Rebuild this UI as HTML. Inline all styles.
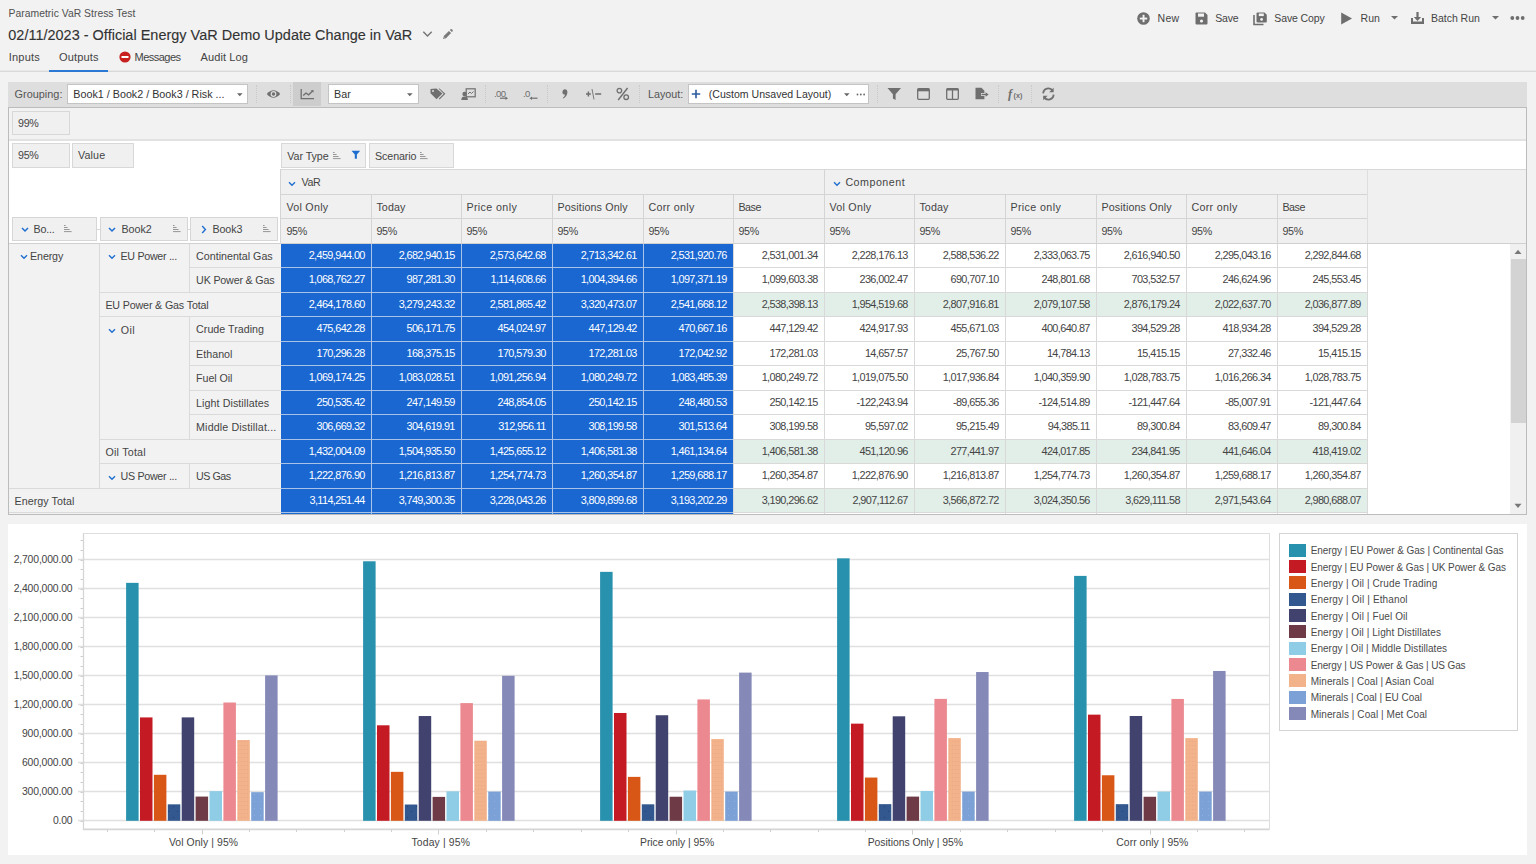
<!DOCTYPE html>
<html><head><meta charset="utf-8"><title>Parametric VaR Stress Test</title>
<style>
*{margin:0;padding:0;box-sizing:border-box}
html,body{width:1536px;height:864px;overflow:hidden;background:#f2f2f2;font-family:"Liberation Sans",sans-serif;color:#444}
body{position:relative}
.a{position:absolute;white-space:nowrap;line-height:1}
.n{letter-spacing:-0.62px}
</style></head><body>
<div class="a " style="left:8.60px;top:9.34px;font-size:10.35px;color:#505050;letter-spacing:0.026px;">Parametric VaR Stress Test</div><div class="a " style="left:8.30px;top:27.57px;font-size:14.45px;color:#333333;-webkit-text-stroke:0.12px #333;letter-spacing:0.023px;">02/11/2023 - Official Energy VaR Demo Update Change in VaR</div><svg class="a" style="left:422px;top:30px;" width="12" height="8" viewBox="0 0 12 8"><path d="M1.3 1.8 L5.5 6 L9.7 1.8" fill="none" stroke="#777" stroke-width="1.5"/></svg><svg class="a" style="left:442px;top:29px;" width="12" height="12" viewBox="0 0 12 12"><path d="M1 10 L1.8 7 L6.9 1.9 L9.1 4.1 L4 9.2 Z" fill="#7a7a7a"/><path d="M7.8 1 L8.6 0.3 Q9.4 -0.2 10.2 0.6 L10.4 0.8 Q11.1 1.6 10.5 2.4 L9.9 3.1 Z" fill="#7a7a7a"/><path d="M1.8 8.2 L2.6 9.2" stroke="#f2f2f2" stroke-width="0.6"/></svg><div class="a " style="left:8.80px;top:51.65px;font-size:11.05px;color:#444;letter-spacing:0.180px;">Inputs</div><div class="a " style="left:58.90px;top:51.65px;font-size:11.05px;color:#444;letter-spacing:0.151px;">Outputs</div><svg class="a" style="left:119px;top:51px;" width="12" height="12" viewBox="0 0 12 12"><circle cx="6" cy="6" r="5.6" fill="#c8201f"/><rect x="2.5" y="5" width="7" height="2" fill="#fff"/></svg><div class="a " style="left:134.60px;top:51.65px;font-size:11.05px;color:#444;letter-spacing:-0.552px;">Messages</div><div class="a " style="left:200.60px;top:51.65px;font-size:11.05px;color:#444;letter-spacing:0.076px;">Audit Log</div><div class="a" style="left:0px;top:70px;width:1536px;height:1px;background:#e8e8e8"></div><div class="a" style="left:0px;top:71px;width:1536px;height:1px;background:#d9d9d9"></div><div class="a" style="left:49px;top:70px;width:59px;height:2px;background:#2b78d5"></div><svg class="a" style="left:1137px;top:12px;" width="13" height="13" viewBox="0 0 13 13"><circle cx="6.5" cy="6.5" r="6.3" fill="#6e6e6e"/><rect x="5.6" y="2.8" width="1.9" height="7.4" fill="#f2f2f2"/><rect x="2.8" y="5.6" width="7.4" height="1.9" fill="#f2f2f2"/></svg><div class="a " style="left:1157.60px;top:13.01px;font-size:10.5px;color:#444;letter-spacing:0.297px;">New</div><svg class="a" style="left:1195px;top:12px;" width="13" height="13" viewBox="0 0 13 13"><path d="M0.5 1.5 Q0.5 0.5 1.5 0.5 L10 0.5 L12.5 3 L12.5 11.5 Q12.5 12.5 11.5 12.5 L1.5 12.5 Q0.5 12.5 0.5 11.5Z" fill="#6e6e6e"/><rect x="3" y="1.5" width="6" height="3.2" fill="#f2f2f2"/><circle cx="6.5" cy="9" r="1.6" fill="#f2f2f2"/></svg><div class="a " style="left:1215.30px;top:13.01px;font-size:10.5px;color:#444;letter-spacing:-0.211px;">Save</div><svg class="a" style="left:1253px;top:11px;" width="15" height="15" viewBox="0 0 15 15"><path d="M1 4 L1 13.5 L10.5 13.5" fill="none" stroke="#6e6e6e" stroke-width="1.6"/><path d="M3.5 2.5 Q3.5 1.5 4.5 1.5 L11.5 1.5 L13.8 3.8 L13.8 10.5 Q13.8 11.5 12.8 11.5 L4.5 11.5 Q3.5 11.5 3.5 10.5Z" fill="#6e6e6e"/><rect x="5.8" y="2.5" width="5" height="2.6" fill="#f2f2f2"/><circle cx="8.6" cy="8.4" r="1.4" fill="#f2f2f2"/></svg><div class="a " style="left:1274.30px;top:13.01px;font-size:10.5px;color:#444;letter-spacing:-0.108px;">Save Copy</div><svg class="a" style="left:1340px;top:12px;" width="13" height="13" viewBox="0 0 13 13"><path d="M1.2 0.5 L12 6.5 L1.2 12.5Z" fill="#6e6e6e"/></svg><div class="a " style="left:1360.60px;top:13.01px;font-size:10.5px;color:#444;letter-spacing:-0.031px;">Run</div><svg class="a" style="left:1391px;top:16px;" width="7" height="4" viewBox="0 0 7 4"><path d="M0 0 L7 0 L3.5 3.5Z" fill="#6e6e6e"/></svg><svg class="a" style="left:1410px;top:11px;" width="15" height="14" viewBox="0 0 15 14"><path d="M1 7 L1 13 L14 13 L14 7 L12 7 L12 10.5 L3 10.5 L3 7Z" fill="#6e6e6e"/><rect x="6.4" y="1" width="2.2" height="6" fill="#6e6e6e"/><path d="M3.8 6 L11.2 6 L7.5 10Z" fill="#6e6e6e"/></svg><div class="a " style="left:1431.00px;top:13.01px;font-size:10.5px;color:#444;letter-spacing:-0.029px;">Batch Run</div><svg class="a" style="left:1492px;top:16px;" width="7" height="4" viewBox="0 0 7 4"><path d="M0 0 L7 0 L3.5 3.5Z" fill="#6e6e6e"/></svg><svg class="a" style="left:1510px;top:15px;" width="15" height="6" viewBox="0 0 15 6"><circle cx="2.3" cy="3" r="1.9" fill="#6e6e6e"/><circle cx="7.5" cy="3" r="1.9" fill="#6e6e6e"/><circle cx="12.7" cy="3" r="1.9" fill="#6e6e6e"/></svg><div class="a" style="left:8px;top:82px;width:1519px;height:25px;background:#dedede"></div><div class="a " style="left:14.60px;top:88.77px;font-size:10.9px;color:#555;">Grouping:</div><div class="a" style="left:67px;top:84px;width:181px;height:20px;background:#fff;border:1px solid #c4c4c4"></div><div class="a " style="left:73.30px;top:88.90px;font-size:10.75px;color:#333;">Book1 / Book2 / Book3 / Risk ...</div><svg class="a" style="left:237px;top:93px;" width="6" height="4" viewBox="0 0 6 4"><path d="M0 0.3 L5.6 0.3 L2.8 3.2Z" fill="#666"/></svg><div class="a" style="left:256px;top:85px;width:1px;height:18px;border-left:1px dotted #c9c9c9"></div><svg class="a" style="left:266px;top:88px;" width="15" height="12" viewBox="0 0 15 12"><path d="M0.8 6 Q7.5 -1.5 14.2 6 Q7.5 13.5 0.8 6Z" fill="#6f6f6f"/><circle cx="7.5" cy="6" r="2.9" fill="#dddddd"/><circle cx="7.5" cy="6" r="1.7" fill="#6f6f6f"/></svg><div class="a" style="left:290px;top:85px;width:1px;height:18px;border-left:1px dotted #c9c9c9"></div><div class="a" style="left:293px;top:82px;width:28px;height:24px;background:#cdcdcd"></div><svg class="a" style="left:300px;top:88px;" width="15" height="12" viewBox="0 0 15 12"><path d="M1.2 1 L1.2 10.6 L14 10.6" fill="none" stroke="#6f6f6f" stroke-width="1.3"/><path d="M3.2 7.6 L6 5 L8.6 6.8 L12.6 3" fill="none" stroke="#6f6f6f" stroke-width="1.3"/><path d="M10.8 2.2 L13.6 2 L13.4 4.8Z" fill="#6f6f6f"/></svg><div class="a" style="left:328px;top:84px;width:91px;height:20px;background:#fff;border:1px solid #c4c4c4"></div><div class="a " style="left:334.00px;top:88.90px;font-size:10.75px;color:#333;">Bar</div><svg class="a" style="left:407px;top:93px;" width="6" height="4" viewBox="0 0 6 4"><path d="M0 0.3 L5.6 0.3 L2.8 3.2Z" fill="#666"/></svg><svg class="a" style="left:430px;top:88px;" width="17" height="12" viewBox="0 0 17 12"><path d="M0.5 1 L0.5 5.2 L6.5 11.3 L12.4 5.4 L6.4 0.6 Z" fill="#6f6f6f"/><path d="M8.5 0.6 L9.5 0.6 L15.4 5.8 L9.6 11.4 L8.8 10.7 L13.7 5.8Z" fill="#6f6f6f"/><circle cx="3" cy="3" r="1" fill="#ddd"/></svg><svg class="a" style="left:461px;top:88px;" width="15" height="13" viewBox="0 0 15 13"><rect x="5.2" y="0.8" width="9" height="8" fill="none" stroke="#6f6f6f" stroke-width="1.2"/><path d="M7 6 L9 4 L10.5 5.5 L12.5 3.5" fill="none" stroke="#6f6f6f" stroke-width="1"/><circle cx="3.6" cy="6" r="2.2" fill="#6f6f6f"/><path d="M0.3 12 Q0.3 8.6 3.6 8.6 Q6.9 8.6 6.9 12Z" fill="#6f6f6f"/></svg><div class="a" style="left:485px;top:85px;width:1px;height:18px;border-left:1px dotted #c9c9c9"></div><svg class="a" style="left:494px;top:88px;" width="16" height="12" viewBox="0 0 16 12"><text x="0" y="8.6" font-size="9.5" font-family="Liberation Sans" fill="#6f6f6f" letter-spacing="-0.6">.00</text><path d="M6 10.2 L12.5 10.2" stroke="#6f6f6f" stroke-width="1.2"/><path d="M11.5 8.4 L14 10.2 L11.5 12Z" fill="#6f6f6f"/></svg><svg class="a" style="left:523px;top:88px;" width="16" height="12" viewBox="0 0 16 12"><text x="0" y="8.6" font-size="9.5" font-family="Liberation Sans" fill="#6f6f6f" letter-spacing="-0.6">.0</text><path d="M8 10.2 L14.5 10.2" stroke="#6f6f6f" stroke-width="1.2"/><path d="M9 8.4 L6.5 10.2 L9 12Z" fill="#6f6f6f"/></svg><div class="a" style="left:547px;top:85px;width:1px;height:18px;border-left:1px dotted #c9c9c9"></div><svg class="a" style="left:560px;top:88px;" width="10" height="12" viewBox="0 0 10 12"><path d="M4.6 1.2 Q7.6 1.2 7.4 4.6 Q7 8.6 3.2 10.6 L2.8 10 Q5 8.2 5 6.6 Q2.4 6.6 2.4 4 Q2.6 1.2 4.6 1.2Z" fill="#6f6f6f"/></svg><svg class="a" style="left:585px;top:88px;" width="18" height="13" viewBox="0 0 18 13"><path d="M1 6 L5.8 6 M3.4 3.6 L3.4 8.4" stroke="#6f6f6f" stroke-width="1.5"/><path d="M7 1 L9 11.5" stroke="#6f6f6f" stroke-width="0.9"/><path d="M10.2 6 L16.2 6" stroke="#6f6f6f" stroke-width="1.5"/></svg><svg class="a" style="left:616px;top:87px;" width="14" height="14" viewBox="0 0 14 14"><circle cx="3.4" cy="3.6" r="2.3" fill="none" stroke="#6f6f6f" stroke-width="1.3"/><circle cx="10.2" cy="10.2" r="2.3" fill="none" stroke="#6f6f6f" stroke-width="1.3"/><path d="M11.6 1 L2.2 13" stroke="#6f6f6f" stroke-width="1.4"/></svg><div class="a" style="left:639px;top:85px;width:1px;height:18px;border-left:1px dotted #c9c9c9"></div><div class="a " style="left:648.00px;top:88.90px;font-size:10.75px;color:#555;">Layout:</div><div class="a" style="left:688px;top:84px;width:181px;height:20px;background:#fff;border:1px solid #c4c4c4"></div><svg class="a" style="left:690px;top:88px;" width="12" height="12" viewBox="0 0 12 12"><path d="M6 1.8 L6 10.2 M1.8 6 L10.2 6" stroke="#2a5a9e" stroke-width="1.6"/></svg><div class="a " style="left:708.75px;top:89.07px;font-size:10.55px;color:#333;">(Custom Unsaved Layout)</div><svg class="a" style="left:844px;top:93px;" width="6" height="4" viewBox="0 0 6 4"><path d="M0 0.3 L5.6 0.3 L2.8 3.2Z" fill="#666"/></svg><svg class="a" style="left:856px;top:93px;" width="10" height="3" viewBox="0 0 10 3"><circle cx="1.5" cy="1.5" r="0.9" fill="#666"/><circle cx="4.8" cy="1.5" r="0.9" fill="#666"/><circle cx="8.1" cy="1.5" r="0.9" fill="#666"/></svg><div class="a" style="left:877px;top:85px;width:1px;height:18px;border-left:1px dotted #c9c9c9"></div><svg class="a" style="left:887px;top:87px;" width="15" height="14" viewBox="0 0 15 14"><path d="M0.5 1 L14 1 L8.6 7.2 L8.6 13 L5.9 11.6 L5.9 7.2Z" fill="#6f6f6f"/></svg><svg class="a" style="left:917px;top:88px;" width="13" height="12" viewBox="0 0 13 12"><rect x="0.7" y="0.7" width="11.6" height="10.6" rx="1" fill="none" stroke="#6f6f6f" stroke-width="1.3"/><rect x="0.7" y="0.7" width="11.6" height="2.6" fill="#6f6f6f"/></svg><svg class="a" style="left:946px;top:88px;" width="13" height="12" viewBox="0 0 13 12"><rect x="0.7" y="0.7" width="11.6" height="10.6" rx="1" fill="none" stroke="#6f6f6f" stroke-width="1.3"/><rect x="0.7" y="0.7" width="11.6" height="1.8" fill="#6f6f6f"/><path d="M6.5 1 L6.5 11" stroke="#6f6f6f" stroke-width="1.3"/></svg><svg class="a" style="left:975px;top:87px;" width="14" height="14" viewBox="0 0 14 14"><path d="M0.5 0.8 L6.5 0.8 L9.4 3.7 L9.4 6 L6 6 L6 9 L9.4 9 L9.4 12.2 L0.5 12.2Z" fill="#6f6f6f"/><path d="M6.5 7.5 L11 7.5" stroke="#6f6f6f" stroke-width="1.4"/><path d="M10.6 5.2 L13.6 7.5 L10.6 9.8Z" fill="#6f6f6f"/></svg><div class="a" style="left:998px;top:85px;width:1px;height:18px;border-left:1px dotted #c9c9c9"></div><svg class="a" style="left:1007px;top:87px;" width="17" height="14" viewBox="0 0 17 14"><text x="1" y="11" font-size="12.5" font-style="italic" font-weight="bold" font-family="Liberation Serif" fill="#6f6f6f">f</text><text x="6.6" y="10.8" font-size="7.2" font-weight="bold" font-family="Liberation Sans" fill="#6f6f6f">(x)</text></svg><div class="a" style="left:1031px;top:85px;width:1px;height:18px;border-left:1px dotted #c9c9c9"></div><svg class="a" style="left:1041px;top:87px;" width="15" height="14" viewBox="0 0 15 14"><path d="M2.2 6.4 A5.2 5.2 0 0 1 11.6 3.6" fill="none" stroke="#6f6f6f" stroke-width="1.8"/><path d="M12.6 0.8 L12.6 5.2 L8.2 5.2Z" fill="#6f6f6f"/><path d="M12.6 7.6 A5.2 5.2 0 0 1 3.2 10.4" fill="none" stroke="#6f6f6f" stroke-width="1.8"/><path d="M2.2 13.2 L2.2 8.8 L6.6 8.8Z" fill="#6f6f6f"/></svg><div class="a" style="left:8px;top:107px;width:1519px;height:408px;background:#fff;border:1px solid #bcbcbc"></div><div class="a" style="left:9px;top:108px;width:1517px;height:31px;background:#f2f2f2"></div><div class="a" style="left:9px;top:139px;width:1517px;height:2px;background:#e2e2e2"></div><div class="a" style="left:12px;top:111px;width:58px;height:24px;background:#f0f0f0;border:1px solid #d8d8d8"></div><div class="a " style="left:18.00px;top:118.44px;font-size:10.7px;color:#444;letter-spacing:-0.308px;">99%</div><div class="a" style="left:12px;top:143px;width:58px;height:25px;background:#f0f0f0;border:1px solid #d8d8d8"></div><div class="a " style="left:18.00px;top:150.44px;font-size:10.7px;color:#444;letter-spacing:-0.308px;">95%</div><div class="a" style="left:72px;top:143px;width:62px;height:25px;background:#f0f0f0;border:1px solid #d8d8d8"></div><div class="a " style="left:78.00px;top:150.44px;font-size:10.7px;color:#444;letter-spacing:0.157px;">Value</div><div class="a" style="left:281px;top:143px;width:85px;height:25px;background:#f0f0f0;border:1px solid #d8d8d8"></div><div class="a " style="left:287.30px;top:150.54px;font-size:10.7px;color:#444;letter-spacing:-0.062px;">Var Type</div><svg class="a" style="left:332.5px;top:152px;" width="9" height="8" viewBox="0 0 9 8"><path d="M0 0.5 L1.6 0.5 M0 2.5 L3.6 2.5 M0 4.5 L5.6 4.5 M0 6.6 L7.6 6.6" stroke="#8c8c8c" stroke-width="0.9"/></svg><svg class="a" style="left:351px;top:150px;" width="10" height="10" viewBox="0 0 10 10"><path d="M0.5 0.8 L9.2 0.8 L5.9 4.6 L5.9 8.8 L3.8 8.8 L3.8 4.6Z" fill="#1e6fd0"/></svg><div class="a" style="left:369px;top:143px;width:85px;height:25px;background:#f0f0f0;border:1px solid #d8d8d8"></div><div class="a " style="left:375.10px;top:150.54px;font-size:10.7px;color:#444;letter-spacing:-0.119px;">Scenario</div><svg class="a" style="left:420.4px;top:152px;" width="9" height="8" viewBox="0 0 9 8"><path d="M0 0.5 L1.6 0.5 M0 2.5 L3.6 2.5 M0 4.5 L5.6 4.5 M0 6.6 L7.6 6.6" stroke="#8c8c8c" stroke-width="0.9"/></svg><div class="a" style="left:281px;top:169px;width:1245px;height:74px;background:#f0f0f0"></div><div class="a" style="left:281px;top:169px;width:1245px;height:1px;background:#d8d8d8"></div><div class="a" style="left:281px;top:194px;width:1086px;height:1px;background:#d4d4d4"></div><div class="a" style="left:281px;top:218px;width:1086px;height:1px;background:#d4d4d4"></div><div class="a" style="left:9px;top:243px;width:1517px;height:1px;background:#d0d0d0"></div><div class="a" style="left:280px;top:169px;width:1px;height:75px;background:#d4d4d4"></div><div class="a" style="left:824px;top:169px;width:1px;height:75px;background:#d4d4d4"></div><div class="a" style="left:1367px;top:170px;width:1px;height:73px;background:#dedede"></div><div class="a" style="left:371px;top:194px;width:1px;height:49px;background:#d4d4d4"></div><div class="a" style="left:461px;top:194px;width:1px;height:49px;background:#d4d4d4"></div><div class="a" style="left:552px;top:194px;width:1px;height:49px;background:#d4d4d4"></div><div class="a" style="left:643px;top:194px;width:1px;height:49px;background:#d4d4d4"></div><div class="a" style="left:733px;top:194px;width:1px;height:49px;background:#d4d4d4"></div><div class="a" style="left:914px;top:194px;width:1px;height:49px;background:#d4d4d4"></div><div class="a" style="left:1005px;top:194px;width:1px;height:49px;background:#d4d4d4"></div><div class="a" style="left:1096px;top:194px;width:1px;height:49px;background:#d4d4d4"></div><div class="a" style="left:1186px;top:194px;width:1px;height:49px;background:#d4d4d4"></div><div class="a" style="left:1277px;top:194px;width:1px;height:49px;background:#d4d4d4"></div><svg class="a" style="left:288px;top:181px;" width="8" height="6" viewBox="0 0 8 6"><path d="M1 1.2 L4 4.2 L7 1.2" fill="none" stroke="#1f6fd0" stroke-width="1.4"/></svg><div class="a " style="left:301.50px;top:176.94px;font-size:10.7px;color:#444;letter-spacing:-0.411px;">VaR</div><svg class="a" style="left:833px;top:181px;" width="8" height="6" viewBox="0 0 8 6"><path d="M1 1.2 L4 4.2 L7 1.2" fill="none" stroke="#1f6fd0" stroke-width="1.4"/></svg><div class="a " style="left:845.40px;top:176.94px;font-size:10.7px;color:#444;letter-spacing:0.498px;">Component</div><div class="a " style="left:286.40px;top:201.54px;font-size:10.7px;color:#444;letter-spacing:0.279px;">Vol Only</div><div class="a " style="left:286.40px;top:225.74px;font-size:10.7px;color:#444;letter-spacing:-0.308px;">95%</div><div class="a " style="left:376.40px;top:201.54px;font-size:10.7px;color:#444;letter-spacing:0.112px;">Today</div><div class="a " style="left:376.40px;top:225.74px;font-size:10.7px;color:#444;letter-spacing:-0.308px;">95%</div><div class="a " style="left:466.40px;top:201.54px;font-size:10.7px;color:#444;letter-spacing:0.380px;">Price only</div><div class="a " style="left:466.40px;top:225.74px;font-size:10.7px;color:#444;letter-spacing:-0.308px;">95%</div><div class="a " style="left:557.40px;top:201.54px;font-size:10.7px;color:#444;letter-spacing:0.147px;">Positions Only</div><div class="a " style="left:557.40px;top:225.74px;font-size:10.7px;color:#444;letter-spacing:-0.308px;">95%</div><div class="a " style="left:648.40px;top:201.54px;font-size:10.7px;color:#444;letter-spacing:0.324px;">Corr only</div><div class="a " style="left:648.40px;top:225.74px;font-size:10.7px;color:#444;letter-spacing:-0.308px;">95%</div><div class="a " style="left:738.40px;top:201.54px;font-size:10.7px;color:#444;letter-spacing:-0.463px;">Base</div><div class="a " style="left:738.40px;top:225.74px;font-size:10.7px;color:#444;letter-spacing:-0.308px;">95%</div><div class="a " style="left:829.40px;top:201.54px;font-size:10.7px;color:#444;letter-spacing:0.279px;">Vol Only</div><div class="a " style="left:829.40px;top:225.74px;font-size:10.7px;color:#444;letter-spacing:-0.308px;">95%</div><div class="a " style="left:919.40px;top:201.54px;font-size:10.7px;color:#444;letter-spacing:0.112px;">Today</div><div class="a " style="left:919.40px;top:225.74px;font-size:10.7px;color:#444;letter-spacing:-0.308px;">95%</div><div class="a " style="left:1010.40px;top:201.54px;font-size:10.7px;color:#444;letter-spacing:0.380px;">Price only</div><div class="a " style="left:1010.40px;top:225.74px;font-size:10.7px;color:#444;letter-spacing:-0.308px;">95%</div><div class="a " style="left:1101.40px;top:201.54px;font-size:10.7px;color:#444;letter-spacing:0.147px;">Positions Only</div><div class="a " style="left:1101.40px;top:225.74px;font-size:10.7px;color:#444;letter-spacing:-0.308px;">95%</div><div class="a " style="left:1191.40px;top:201.54px;font-size:10.7px;color:#444;letter-spacing:0.324px;">Corr only</div><div class="a " style="left:1191.40px;top:225.74px;font-size:10.7px;color:#444;letter-spacing:-0.308px;">95%</div><div class="a " style="left:1282.40px;top:201.54px;font-size:10.7px;color:#444;letter-spacing:-0.463px;">Base</div><div class="a " style="left:1282.40px;top:225.74px;font-size:10.7px;color:#444;letter-spacing:-0.308px;">95%</div><div class="a" style="left:12px;top:217px;width:85px;height:24px;background:#f0f0f0;border:1px solid #d6d6d6"></div><svg class="a" style="left:20.5px;top:227px;" width="8" height="6" viewBox="0 0 8 6"><path d="M1 1 L4 4 L7 1" fill="none" stroke="#1f6fd0" stroke-width="1.5"/></svg><div class="a " style="left:33.50px;top:223.94px;font-size:10.7px;color:#444;letter-spacing:-0.177px;">Bo...</div><svg class="a" style="left:63.6px;top:225px;" width="9" height="8" viewBox="0 0 9 8"><path d="M0 0.5 L1.6 0.5 M0 2.5 L3.6 2.5 M0 4.5 L5.6 4.5 M0 6.6 L7.6 6.6" stroke="#8c8c8c" stroke-width="0.9"/></svg><div class="a" style="left:100px;top:217px;width:88px;height:24px;background:#f0f0f0;border:1px solid #d6d6d6"></div><svg class="a" style="left:108.0px;top:227px;" width="8" height="6" viewBox="0 0 8 6"><path d="M1 1 L4 4 L7 1" fill="none" stroke="#1f6fd0" stroke-width="1.5"/></svg><div class="a " style="left:121.40px;top:223.94px;font-size:10.7px;color:#444;letter-spacing:0.015px;">Book2</div><svg class="a" style="left:172.7px;top:225px;" width="9" height="8" viewBox="0 0 9 8"><path d="M0 0.5 L1.6 0.5 M0 2.5 L3.6 2.5 M0 4.5 L5.6 4.5 M0 6.6 L7.6 6.6" stroke="#8c8c8c" stroke-width="0.9"/></svg><div class="a" style="left:190px;top:217px;width:88px;height:24px;background:#f0f0f0;border:1px solid #d6d6d6"></div><svg class="a" style="left:200.5px;top:225px;" width="6" height="9" viewBox="0 0 6 9"><path d="M1.2 1 L4.4 4.5 L1.2 8" fill="none" stroke="#1f6fd0" stroke-width="1.4"/></svg><div class="a " style="left:212.40px;top:223.94px;font-size:10.7px;color:#444;letter-spacing:-0.085px;">Book3</div><svg class="a" style="left:263.4px;top:225px;" width="9" height="8" viewBox="0 0 9 8"><path d="M0 0.5 L1.6 0.5 M0 2.5 L3.6 2.5 M0 4.5 L5.6 4.5 M0 6.6 L7.6 6.6" stroke="#8c8c8c" stroke-width="0.9"/></svg><div class="a" style="left:97px;top:229px;width:3px;height:1px;background:#d6d6d6"></div><div class="a" style="left:188px;top:229px;width:2px;height:1px;background:#d6d6d6"></div><div class="a" style="left:9px;top:244px;width:272px;height:270px;background:#f2f2f2"></div><div class="a" style="left:733px;top:293px;width:634px;height:23px;background:#e2efe8"></div><div class="a" style="left:733px;top:440px;width:634px;height:23px;background:#e2efe8"></div><div class="a" style="left:733px;top:489px;width:634px;height:23px;background:#e2efe8"></div><div class="a" style="left:281px;top:244px;width:452px;height:270px;background:#1a67d2"></div><div class="a" style="left:281px;top:267px;width:452px;height:1px;background:#a9c3e6"></div><div class="a" style="left:733px;top:267px;width:634px;height:1px;background:#d9d9d9"></div><div class="a" style="left:281px;top:292px;width:452px;height:1px;background:#a9c3e6"></div><div class="a" style="left:733px;top:292px;width:634px;height:1px;background:#d9d9d9"></div><div class="a" style="left:281px;top:316px;width:452px;height:1px;background:#a9c3e6"></div><div class="a" style="left:733px;top:316px;width:634px;height:1px;background:#d9d9d9"></div><div class="a" style="left:281px;top:341px;width:452px;height:1px;background:#a9c3e6"></div><div class="a" style="left:733px;top:341px;width:634px;height:1px;background:#d9d9d9"></div><div class="a" style="left:281px;top:365px;width:452px;height:1px;background:#a9c3e6"></div><div class="a" style="left:733px;top:365px;width:634px;height:1px;background:#d9d9d9"></div><div class="a" style="left:281px;top:390px;width:452px;height:1px;background:#a9c3e6"></div><div class="a" style="left:733px;top:390px;width:634px;height:1px;background:#d9d9d9"></div><div class="a" style="left:281px;top:414px;width:452px;height:1px;background:#a9c3e6"></div><div class="a" style="left:733px;top:414px;width:634px;height:1px;background:#d9d9d9"></div><div class="a" style="left:281px;top:439px;width:452px;height:1px;background:#a9c3e6"></div><div class="a" style="left:733px;top:439px;width:634px;height:1px;background:#d9d9d9"></div><div class="a" style="left:281px;top:463px;width:452px;height:1px;background:#a9c3e6"></div><div class="a" style="left:733px;top:463px;width:634px;height:1px;background:#d9d9d9"></div><div class="a" style="left:281px;top:488px;width:452px;height:1px;background:#a9c3e6"></div><div class="a" style="left:733px;top:488px;width:634px;height:1px;background:#d9d9d9"></div><div class="a" style="left:281px;top:512px;width:452px;height:1px;background:#a9c3e6"></div><div class="a" style="left:733px;top:512px;width:634px;height:1px;background:#d9d9d9"></div><div class="a" style="left:371px;top:244px;width:1px;height:270px;background:#a9c3e6"></div><div class="a" style="left:461px;top:244px;width:1px;height:270px;background:#a9c3e6"></div><div class="a" style="left:552px;top:244px;width:1px;height:270px;background:#a9c3e6"></div><div class="a" style="left:643px;top:244px;width:1px;height:270px;background:#a9c3e6"></div><div class="a" style="left:733px;top:244px;width:1px;height:270px;background:#d9d9d9"></div><div class="a" style="left:824px;top:244px;width:1px;height:270px;background:#d9d9d9"></div><div class="a" style="left:914px;top:244px;width:1px;height:270px;background:#d9d9d9"></div><div class="a" style="left:1005px;top:244px;width:1px;height:270px;background:#d9d9d9"></div><div class="a" style="left:1096px;top:244px;width:1px;height:270px;background:#d9d9d9"></div><div class="a" style="left:1186px;top:244px;width:1px;height:270px;background:#d9d9d9"></div><div class="a" style="left:1277px;top:244px;width:1px;height:270px;background:#d9d9d9"></div><div class="a" style="left:1367px;top:244px;width:1px;height:270px;background:#d9d9d9"></div><div class="a" style="right:1171.20px;top:250.37px;font-size:10.9px;color:#ffffff;letter-spacing:-0.62px">2,459,944.00</div><div class="a" style="right:1081.20px;top:250.37px;font-size:10.9px;color:#ffffff;letter-spacing:-0.62px">2,682,940.15</div><div class="a" style="right:990.20px;top:250.37px;font-size:10.9px;color:#ffffff;letter-spacing:-0.62px">2,573,642.68</div><div class="a" style="right:899.20px;top:250.37px;font-size:10.9px;color:#ffffff;letter-spacing:-0.62px">2,713,342.61</div><div class="a" style="right:809.20px;top:250.37px;font-size:10.9px;color:#ffffff;letter-spacing:-0.62px">2,531,920.76</div><div class="a" style="right:718.20px;top:250.37px;font-size:10.9px;color:#444;letter-spacing:-0.62px">2,531,001.34</div><div class="a" style="right:628.20px;top:250.37px;font-size:10.9px;color:#444;letter-spacing:-0.62px">2,228,176.13</div><div class="a" style="right:537.20px;top:250.37px;font-size:10.9px;color:#444;letter-spacing:-0.62px">2,588,536.22</div><div class="a" style="right:446.20px;top:250.37px;font-size:10.9px;color:#444;letter-spacing:-0.62px">2,333,063.75</div><div class="a" style="right:356.20px;top:250.37px;font-size:10.9px;color:#444;letter-spacing:-0.62px">2,616,940.50</div><div class="a" style="right:265.20px;top:250.37px;font-size:10.9px;color:#444;letter-spacing:-0.62px">2,295,043.16</div><div class="a" style="right:175.20px;top:250.37px;font-size:10.9px;color:#444;letter-spacing:-0.62px">2,292,844.68</div><div class="a" style="right:1171.20px;top:274.37px;font-size:10.9px;color:#ffffff;letter-spacing:-0.62px">1,068,762.27</div><div class="a" style="right:1081.20px;top:274.37px;font-size:10.9px;color:#ffffff;letter-spacing:-0.62px">987,281.30</div><div class="a" style="right:990.20px;top:274.37px;font-size:10.9px;color:#ffffff;letter-spacing:-0.62px">1,114,608.66</div><div class="a" style="right:899.20px;top:274.37px;font-size:10.9px;color:#ffffff;letter-spacing:-0.62px">1,004,394.66</div><div class="a" style="right:809.20px;top:274.37px;font-size:10.9px;color:#ffffff;letter-spacing:-0.62px">1,097,371.19</div><div class="a" style="right:718.20px;top:274.37px;font-size:10.9px;color:#444;letter-spacing:-0.62px">1,099,603.38</div><div class="a" style="right:628.20px;top:274.37px;font-size:10.9px;color:#444;letter-spacing:-0.62px">236,002.47</div><div class="a" style="right:537.20px;top:274.37px;font-size:10.9px;color:#444;letter-spacing:-0.62px">690,707.10</div><div class="a" style="right:446.20px;top:274.37px;font-size:10.9px;color:#444;letter-spacing:-0.62px">248,801.68</div><div class="a" style="right:356.20px;top:274.37px;font-size:10.9px;color:#444;letter-spacing:-0.62px">703,532.57</div><div class="a" style="right:265.20px;top:274.37px;font-size:10.9px;color:#444;letter-spacing:-0.62px">246,624.96</div><div class="a" style="right:175.20px;top:274.37px;font-size:10.9px;color:#444;letter-spacing:-0.62px">245,553.45</div><div class="a" style="right:1171.20px;top:299.37px;font-size:10.9px;color:#ffffff;letter-spacing:-0.62px">2,464,178.60</div><div class="a" style="right:1081.20px;top:299.37px;font-size:10.9px;color:#ffffff;letter-spacing:-0.62px">3,279,243.32</div><div class="a" style="right:990.20px;top:299.37px;font-size:10.9px;color:#ffffff;letter-spacing:-0.62px">2,581,865.42</div><div class="a" style="right:899.20px;top:299.37px;font-size:10.9px;color:#ffffff;letter-spacing:-0.62px">3,320,473.07</div><div class="a" style="right:809.20px;top:299.37px;font-size:10.9px;color:#ffffff;letter-spacing:-0.62px">2,541,668.12</div><div class="a" style="right:718.20px;top:299.37px;font-size:10.9px;color:#444;letter-spacing:-0.62px">2,538,398.13</div><div class="a" style="right:628.20px;top:299.37px;font-size:10.9px;color:#444;letter-spacing:-0.62px">1,954,519.68</div><div class="a" style="right:537.20px;top:299.37px;font-size:10.9px;color:#444;letter-spacing:-0.62px">2,807,916.81</div><div class="a" style="right:446.20px;top:299.37px;font-size:10.9px;color:#444;letter-spacing:-0.62px">2,079,107.58</div><div class="a" style="right:356.20px;top:299.37px;font-size:10.9px;color:#444;letter-spacing:-0.62px">2,876,179.24</div><div class="a" style="right:265.20px;top:299.37px;font-size:10.9px;color:#444;letter-spacing:-0.62px">2,022,637.70</div><div class="a" style="right:175.20px;top:299.37px;font-size:10.9px;color:#444;letter-spacing:-0.62px">2,036,877.89</div><div class="a" style="right:1171.20px;top:323.37px;font-size:10.9px;color:#ffffff;letter-spacing:-0.62px">475,642.28</div><div class="a" style="right:1081.20px;top:323.37px;font-size:10.9px;color:#ffffff;letter-spacing:-0.62px">506,171.75</div><div class="a" style="right:990.20px;top:323.37px;font-size:10.9px;color:#ffffff;letter-spacing:-0.62px">454,024.97</div><div class="a" style="right:899.20px;top:323.37px;font-size:10.9px;color:#ffffff;letter-spacing:-0.62px">447,129.42</div><div class="a" style="right:809.20px;top:323.37px;font-size:10.9px;color:#ffffff;letter-spacing:-0.62px">470,667.16</div><div class="a" style="right:718.20px;top:323.37px;font-size:10.9px;color:#444;letter-spacing:-0.62px">447,129.42</div><div class="a" style="right:628.20px;top:323.37px;font-size:10.9px;color:#444;letter-spacing:-0.62px">424,917.93</div><div class="a" style="right:537.20px;top:323.37px;font-size:10.9px;color:#444;letter-spacing:-0.62px">455,671.03</div><div class="a" style="right:446.20px;top:323.37px;font-size:10.9px;color:#444;letter-spacing:-0.62px">400,640.87</div><div class="a" style="right:356.20px;top:323.37px;font-size:10.9px;color:#444;letter-spacing:-0.62px">394,529.28</div><div class="a" style="right:265.20px;top:323.37px;font-size:10.9px;color:#444;letter-spacing:-0.62px">418,934.28</div><div class="a" style="right:175.20px;top:323.37px;font-size:10.9px;color:#444;letter-spacing:-0.62px">394,529.28</div><div class="a" style="right:1171.20px;top:348.37px;font-size:10.9px;color:#ffffff;letter-spacing:-0.62px">170,296.28</div><div class="a" style="right:1081.20px;top:348.37px;font-size:10.9px;color:#ffffff;letter-spacing:-0.62px">168,375.15</div><div class="a" style="right:990.20px;top:348.37px;font-size:10.9px;color:#ffffff;letter-spacing:-0.62px">170,579.30</div><div class="a" style="right:899.20px;top:348.37px;font-size:10.9px;color:#ffffff;letter-spacing:-0.62px">172,281.03</div><div class="a" style="right:809.20px;top:348.37px;font-size:10.9px;color:#ffffff;letter-spacing:-0.62px">172,042.92</div><div class="a" style="right:718.20px;top:348.37px;font-size:10.9px;color:#444;letter-spacing:-0.62px">172,281.03</div><div class="a" style="right:628.20px;top:348.37px;font-size:10.9px;color:#444;letter-spacing:-0.62px">14,657.57</div><div class="a" style="right:537.20px;top:348.37px;font-size:10.9px;color:#444;letter-spacing:-0.62px">25,767.50</div><div class="a" style="right:446.20px;top:348.37px;font-size:10.9px;color:#444;letter-spacing:-0.62px">14,784.13</div><div class="a" style="right:356.20px;top:348.37px;font-size:10.9px;color:#444;letter-spacing:-0.62px">15,415.15</div><div class="a" style="right:265.20px;top:348.37px;font-size:10.9px;color:#444;letter-spacing:-0.62px">27,332.46</div><div class="a" style="right:175.20px;top:348.37px;font-size:10.9px;color:#444;letter-spacing:-0.62px">15,415.15</div><div class="a" style="right:1171.20px;top:372.37px;font-size:10.9px;color:#ffffff;letter-spacing:-0.62px">1,069,174.25</div><div class="a" style="right:1081.20px;top:372.37px;font-size:10.9px;color:#ffffff;letter-spacing:-0.62px">1,083,028.51</div><div class="a" style="right:990.20px;top:372.37px;font-size:10.9px;color:#ffffff;letter-spacing:-0.62px">1,091,256.94</div><div class="a" style="right:899.20px;top:372.37px;font-size:10.9px;color:#ffffff;letter-spacing:-0.62px">1,080,249.72</div><div class="a" style="right:809.20px;top:372.37px;font-size:10.9px;color:#ffffff;letter-spacing:-0.62px">1,083,485.39</div><div class="a" style="right:718.20px;top:372.37px;font-size:10.9px;color:#444;letter-spacing:-0.62px">1,080,249.72</div><div class="a" style="right:628.20px;top:372.37px;font-size:10.9px;color:#444;letter-spacing:-0.62px">1,019,075.50</div><div class="a" style="right:537.20px;top:372.37px;font-size:10.9px;color:#444;letter-spacing:-0.62px">1,017,936.84</div><div class="a" style="right:446.20px;top:372.37px;font-size:10.9px;color:#444;letter-spacing:-0.62px">1,040,359.90</div><div class="a" style="right:356.20px;top:372.37px;font-size:10.9px;color:#444;letter-spacing:-0.62px">1,028,783.75</div><div class="a" style="right:265.20px;top:372.37px;font-size:10.9px;color:#444;letter-spacing:-0.62px">1,016,266.34</div><div class="a" style="right:175.20px;top:372.37px;font-size:10.9px;color:#444;letter-spacing:-0.62px">1,028,783.75</div><div class="a" style="right:1171.20px;top:397.37px;font-size:10.9px;color:#ffffff;letter-spacing:-0.62px">250,535.42</div><div class="a" style="right:1081.20px;top:397.37px;font-size:10.9px;color:#ffffff;letter-spacing:-0.62px">247,149.59</div><div class="a" style="right:990.20px;top:397.37px;font-size:10.9px;color:#ffffff;letter-spacing:-0.62px">248,854.05</div><div class="a" style="right:899.20px;top:397.37px;font-size:10.9px;color:#ffffff;letter-spacing:-0.62px">250,142.15</div><div class="a" style="right:809.20px;top:397.37px;font-size:10.9px;color:#ffffff;letter-spacing:-0.62px">248,480.53</div><div class="a" style="right:718.20px;top:397.37px;font-size:10.9px;color:#444;letter-spacing:-0.62px">250,142.15</div><div class="a" style="right:628.20px;top:397.37px;font-size:10.9px;color:#444;letter-spacing:-0.62px">-122,243.94</div><div class="a" style="right:537.20px;top:397.37px;font-size:10.9px;color:#444;letter-spacing:-0.62px">-89,655.36</div><div class="a" style="right:446.20px;top:397.37px;font-size:10.9px;color:#444;letter-spacing:-0.62px">-124,514.89</div><div class="a" style="right:356.20px;top:397.37px;font-size:10.9px;color:#444;letter-spacing:-0.62px">-121,447.64</div><div class="a" style="right:265.20px;top:397.37px;font-size:10.9px;color:#444;letter-spacing:-0.62px">-85,007.91</div><div class="a" style="right:175.20px;top:397.37px;font-size:10.9px;color:#444;letter-spacing:-0.62px">-121,447.64</div><div class="a" style="right:1171.20px;top:421.37px;font-size:10.9px;color:#ffffff;letter-spacing:-0.62px">306,669.32</div><div class="a" style="right:1081.20px;top:421.37px;font-size:10.9px;color:#ffffff;letter-spacing:-0.62px">304,619.91</div><div class="a" style="right:990.20px;top:421.37px;font-size:10.9px;color:#ffffff;letter-spacing:-0.62px">312,956.11</div><div class="a" style="right:899.20px;top:421.37px;font-size:10.9px;color:#ffffff;letter-spacing:-0.62px">308,199.58</div><div class="a" style="right:809.20px;top:421.37px;font-size:10.9px;color:#ffffff;letter-spacing:-0.62px">301,513.64</div><div class="a" style="right:718.20px;top:421.37px;font-size:10.9px;color:#444;letter-spacing:-0.62px">308,199.58</div><div class="a" style="right:628.20px;top:421.37px;font-size:10.9px;color:#444;letter-spacing:-0.62px">95,597.02</div><div class="a" style="right:537.20px;top:421.37px;font-size:10.9px;color:#444;letter-spacing:-0.62px">95,215.49</div><div class="a" style="right:446.20px;top:421.37px;font-size:10.9px;color:#444;letter-spacing:-0.62px">94,385.11</div><div class="a" style="right:356.20px;top:421.37px;font-size:10.9px;color:#444;letter-spacing:-0.62px">89,300.84</div><div class="a" style="right:265.20px;top:421.37px;font-size:10.9px;color:#444;letter-spacing:-0.62px">83,609.47</div><div class="a" style="right:175.20px;top:421.37px;font-size:10.9px;color:#444;letter-spacing:-0.62px">89,300.84</div><div class="a" style="right:1171.20px;top:446.37px;font-size:10.9px;color:#ffffff;letter-spacing:-0.62px">1,432,004.09</div><div class="a" style="right:1081.20px;top:446.37px;font-size:10.9px;color:#ffffff;letter-spacing:-0.62px">1,504,935.50</div><div class="a" style="right:990.20px;top:446.37px;font-size:10.9px;color:#ffffff;letter-spacing:-0.62px">1,425,655.12</div><div class="a" style="right:899.20px;top:446.37px;font-size:10.9px;color:#ffffff;letter-spacing:-0.62px">1,406,581.38</div><div class="a" style="right:809.20px;top:446.37px;font-size:10.9px;color:#ffffff;letter-spacing:-0.62px">1,461,134.64</div><div class="a" style="right:718.20px;top:446.37px;font-size:10.9px;color:#444;letter-spacing:-0.62px">1,406,581.38</div><div class="a" style="right:628.20px;top:446.37px;font-size:10.9px;color:#444;letter-spacing:-0.62px">451,120.96</div><div class="a" style="right:537.20px;top:446.37px;font-size:10.9px;color:#444;letter-spacing:-0.62px">277,441.97</div><div class="a" style="right:446.20px;top:446.37px;font-size:10.9px;color:#444;letter-spacing:-0.62px">424,017.85</div><div class="a" style="right:356.20px;top:446.37px;font-size:10.9px;color:#444;letter-spacing:-0.62px">234,841.95</div><div class="a" style="right:265.20px;top:446.37px;font-size:10.9px;color:#444;letter-spacing:-0.62px">441,646.04</div><div class="a" style="right:175.20px;top:446.37px;font-size:10.9px;color:#444;letter-spacing:-0.62px">418,419.02</div><div class="a" style="right:1171.20px;top:470.37px;font-size:10.9px;color:#ffffff;letter-spacing:-0.62px">1,222,876.90</div><div class="a" style="right:1081.20px;top:470.37px;font-size:10.9px;color:#ffffff;letter-spacing:-0.62px">1,216,813.87</div><div class="a" style="right:990.20px;top:470.37px;font-size:10.9px;color:#ffffff;letter-spacing:-0.62px">1,254,774.73</div><div class="a" style="right:899.20px;top:470.37px;font-size:10.9px;color:#ffffff;letter-spacing:-0.62px">1,260,354.87</div><div class="a" style="right:809.20px;top:470.37px;font-size:10.9px;color:#ffffff;letter-spacing:-0.62px">1,259,688.17</div><div class="a" style="right:718.20px;top:470.37px;font-size:10.9px;color:#444;letter-spacing:-0.62px">1,260,354.87</div><div class="a" style="right:628.20px;top:470.37px;font-size:10.9px;color:#444;letter-spacing:-0.62px">1,222,876.90</div><div class="a" style="right:537.20px;top:470.37px;font-size:10.9px;color:#444;letter-spacing:-0.62px">1,216,813.87</div><div class="a" style="right:446.20px;top:470.37px;font-size:10.9px;color:#444;letter-spacing:-0.62px">1,254,774.73</div><div class="a" style="right:356.20px;top:470.37px;font-size:10.9px;color:#444;letter-spacing:-0.62px">1,260,354.87</div><div class="a" style="right:265.20px;top:470.37px;font-size:10.9px;color:#444;letter-spacing:-0.62px">1,259,688.17</div><div class="a" style="right:175.20px;top:470.37px;font-size:10.9px;color:#444;letter-spacing:-0.62px">1,260,354.87</div><div class="a" style="right:1171.20px;top:495.37px;font-size:10.9px;color:#ffffff;letter-spacing:-0.62px">3,114,251.44</div><div class="a" style="right:1081.20px;top:495.37px;font-size:10.9px;color:#ffffff;letter-spacing:-0.62px">3,749,300.35</div><div class="a" style="right:990.20px;top:495.37px;font-size:10.9px;color:#ffffff;letter-spacing:-0.62px">3,228,043.26</div><div class="a" style="right:899.20px;top:495.37px;font-size:10.9px;color:#ffffff;letter-spacing:-0.62px">3,809,899.68</div><div class="a" style="right:809.20px;top:495.37px;font-size:10.9px;color:#ffffff;letter-spacing:-0.62px">3,193,202.29</div><div class="a" style="right:718.20px;top:495.37px;font-size:10.9px;color:#444;letter-spacing:-0.62px">3,190,296.62</div><div class="a" style="right:628.20px;top:495.37px;font-size:10.9px;color:#444;letter-spacing:-0.62px">2,907,112.67</div><div class="a" style="right:537.20px;top:495.37px;font-size:10.9px;color:#444;letter-spacing:-0.62px">3,566,872.72</div><div class="a" style="right:446.20px;top:495.37px;font-size:10.9px;color:#444;letter-spacing:-0.62px">3,024,350.56</div><div class="a" style="right:356.20px;top:495.37px;font-size:10.9px;color:#444;letter-spacing:-0.62px">3,629,111.58</div><div class="a" style="right:265.20px;top:495.37px;font-size:10.9px;color:#444;letter-spacing:-0.62px">2,971,543.64</div><div class="a" style="right:175.20px;top:495.37px;font-size:10.9px;color:#444;letter-spacing:-0.62px">2,980,688.07</div><div class="a" style="left:99px;top:244px;width:1px;height:244px;background:#dadada"></div><div class="a" style="left:189px;top:244px;width:1px;height:48px;background:#dadada"></div><div class="a" style="left:189px;top:317px;width:1px;height:122px;background:#dadada"></div><div class="a" style="left:189px;top:464px;width:1px;height:24px;background:#dadada"></div><div class="a" style="left:190px;top:267px;width:91px;height:1px;background:#dadada"></div><div class="a" style="left:190px;top:341px;width:91px;height:1px;background:#dadada"></div><div class="a" style="left:190px;top:365px;width:91px;height:1px;background:#dadada"></div><div class="a" style="left:190px;top:390px;width:91px;height:1px;background:#dadada"></div><div class="a" style="left:190px;top:414px;width:91px;height:1px;background:#dadada"></div><div class="a" style="left:100px;top:292px;width:181px;height:1px;background:#dadada"></div><div class="a" style="left:100px;top:316px;width:181px;height:1px;background:#dadada"></div><div class="a" style="left:100px;top:439px;width:181px;height:1px;background:#dadada"></div><div class="a" style="left:100px;top:463px;width:181px;height:1px;background:#dadada"></div><div class="a" style="left:9px;top:488px;width:272px;height:1px;background:#dadada"></div><div class="a" style="left:9px;top:512px;width:272px;height:1px;background:#dadada"></div><svg class="a" style="left:19.5px;top:254px;" width="8" height="6" viewBox="0 0 8 6"><path d="M1 1.2 L4 4.2 L7 1.2" fill="none" stroke="#1f6fd0" stroke-width="1.4"/></svg><div class="a " style="left:30.10px;top:250.54px;font-size:10.7px;color:#444;letter-spacing:-0.141px;">Energy</div><svg class="a" style="left:108px;top:254px;" width="8" height="6" viewBox="0 0 8 6"><path d="M1 1.2 L4 4.2 L7 1.2" fill="none" stroke="#1f6fd0" stroke-width="1.4"/></svg><div class="a " style="left:120.50px;top:250.54px;font-size:10.7px;color:#444;letter-spacing:-0.296px;">EU Power ...</div><svg class="a" style="left:108px;top:327.5px;" width="8" height="6" viewBox="0 0 8 6"><path d="M1 1.2 L4 4.2 L7 1.2" fill="none" stroke="#1f6fd0" stroke-width="1.4"/></svg><div class="a " style="left:120.70px;top:324.54px;font-size:10.7px;color:#444;letter-spacing:0.411px;">Oil</div><svg class="a" style="left:108px;top:475px;" width="8" height="6" viewBox="0 0 8 6"><path d="M1 1.2 L4 4.2 L7 1.2" fill="none" stroke="#1f6fd0" stroke-width="1.4"/></svg><div class="a " style="left:120.50px;top:471.44px;font-size:10.7px;color:#444;letter-spacing:-0.296px;">US Power ...</div><div class="a " style="left:196.10px;top:250.54px;font-size:10.7px;color:#444;letter-spacing:-0.002px;">Continental Gas</div><div class="a " style="left:196.10px;top:274.54px;font-size:10.7px;color:#444;letter-spacing:-0.175px;">UK Power &amp; Gas</div><div class="a " style="left:196.10px;top:323.54px;font-size:10.7px;color:#444;letter-spacing:0.008px;">Crude Trading</div><div class="a " style="left:196.10px;top:348.54px;font-size:10.7px;color:#444;letter-spacing:0.018px;">Ethanol</div><div class="a " style="left:196.10px;top:372.54px;font-size:10.7px;color:#444;letter-spacing:-0.067px;">Fuel Oil</div><div class="a " style="left:196.10px;top:397.54px;font-size:10.7px;color:#444;letter-spacing:0.071px;">Light Distillates</div><div class="a " style="left:196.10px;top:421.54px;font-size:10.7px;color:#444;letter-spacing:0.128px;">Middle Distillat...</div><div class="a " style="left:196.10px;top:470.54px;font-size:10.7px;color:#444;letter-spacing:-0.492px;">US Gas</div><div class="a " style="left:105.40px;top:299.54px;font-size:10.7px;color:#444;letter-spacing:-0.150px;">EU Power &amp; Gas Total</div><div class="a " style="left:105.40px;top:446.54px;font-size:10.7px;color:#444;letter-spacing:0.230px;">Oil Total</div><div class="a " style="left:14.60px;top:495.54px;font-size:10.7px;color:#444;letter-spacing:0.047px;">Energy Total</div><div class="a" style="left:1510px;top:244px;width:16px;height:270px;background:#f0f0f0"></div><div class="a" style="left:1511px;top:259px;width:15px;height:164px;background:#d3d3d3"></div><svg class="a" style="left:1514px;top:249px;" width="8" height="6" viewBox="0 0 8 6"><path d="M0.5 5 L4 0.8 L7.5 5Z" fill="#777"/></svg><svg class="a" style="left:1514px;top:503px;" width="8" height="6" viewBox="0 0 8 6"><path d="M0.5 0.8 L4 5 L7.5 0.8Z" fill="#777"/></svg><div class="a" style="left:8px;top:524px;width:1519px;height:331px;background:#fff"></div><svg class="a" style="left:0;top:0" width="1536" height="864" viewBox="0 0 1536 864"><defs><pattern id="pb" width="9" height="11" patternUnits="userSpaceOnUse"><rect width="9" height="11" fill="#33578f"/><rect x="2" y="3" width="1" height="1" fill="#283f73"/><rect x="6" y="8" width="1" height="1" fill="#283f73"/></pattern><pattern id="pp" width="3" height="4" patternUnits="userSpaceOnUse"><rect width="3" height="4" fill="#f3b38a"/><rect x="1" y="1" width="1" height="1" fill="#eea48a"/></pattern><pattern id="pc" width="6" height="7" patternUnits="userSpaceOnUse"><rect width="6" height="7" fill="#7ba1d6"/><rect x="2" y="3" width="1" height="1" fill="#90ade0"/></pattern></defs><rect x="83.5" y="533.5" width="1186" height="295.5" fill="none" stroke="#dedede" stroke-width="1"/><path d="M78 820.5 L1269.5 820.5" stroke="#e0e0e0" stroke-width="1.5"/><path d="M78 791.5 L1269.5 791.5" stroke="#e0e0e0" stroke-width="1.5"/><path d="M78 762.5 L1269.5 762.5" stroke="#e0e0e0" stroke-width="1.5"/><path d="M78 733.5 L1269.5 733.5" stroke="#e0e0e0" stroke-width="1.5"/><path d="M78 704.5 L1269.5 704.5" stroke="#e0e0e0" stroke-width="1.5"/><path d="M78 675.5 L1269.5 675.5" stroke="#e0e0e0" stroke-width="1.5"/><path d="M78 646.5 L1269.5 646.5" stroke="#e0e0e0" stroke-width="1.5"/><path d="M78 617.5 L1269.5 617.5" stroke="#e0e0e0" stroke-width="1.5"/><path d="M78 588.5 L1269.5 588.5" stroke="#e0e0e0" stroke-width="1.5"/><path d="M78 559.5 L1269.5 559.5" stroke="#e0e0e0" stroke-width="1.5"/><path d="M80.5 821.5 L83 821.5" stroke="#cfcfcf" stroke-width="1"/><path d="M80.5 811.5 L83 811.5" stroke="#cfcfcf" stroke-width="1"/><path d="M80.5 801.5 L83 801.5" stroke="#cfcfcf" stroke-width="1"/><path d="M80.5 792.5 L83 792.5" stroke="#cfcfcf" stroke-width="1"/><path d="M80.5 782.5 L83 782.5" stroke="#cfcfcf" stroke-width="1"/><path d="M80.5 772.5 L83 772.5" stroke="#cfcfcf" stroke-width="1"/><path d="M80.5 763.5 L83 763.5" stroke="#cfcfcf" stroke-width="1"/><path d="M80.5 753.5 L83 753.5" stroke="#cfcfcf" stroke-width="1"/><path d="M80.5 743.5 L83 743.5" stroke="#cfcfcf" stroke-width="1"/><path d="M80.5 734.5 L83 734.5" stroke="#cfcfcf" stroke-width="1"/><path d="M80.5 724.5 L83 724.5" stroke="#cfcfcf" stroke-width="1"/><path d="M80.5 714.5 L83 714.5" stroke="#cfcfcf" stroke-width="1"/><path d="M80.5 705.5 L83 705.5" stroke="#cfcfcf" stroke-width="1"/><path d="M80.5 695.5 L83 695.5" stroke="#cfcfcf" stroke-width="1"/><path d="M80.5 685.5 L83 685.5" stroke="#cfcfcf" stroke-width="1"/><path d="M80.5 676.5 L83 676.5" stroke="#cfcfcf" stroke-width="1"/><path d="M80.5 666.5 L83 666.5" stroke="#cfcfcf" stroke-width="1"/><path d="M80.5 656.5 L83 656.5" stroke="#cfcfcf" stroke-width="1"/><path d="M80.5 647.5 L83 647.5" stroke="#cfcfcf" stroke-width="1"/><path d="M80.5 637.5 L83 637.5" stroke="#cfcfcf" stroke-width="1"/><path d="M80.5 627.5 L83 627.5" stroke="#cfcfcf" stroke-width="1"/><path d="M80.5 618.5 L83 618.5" stroke="#cfcfcf" stroke-width="1"/><path d="M80.5 608.5 L83 608.5" stroke="#cfcfcf" stroke-width="1"/><path d="M80.5 598.5 L83 598.5" stroke="#cfcfcf" stroke-width="1"/><path d="M80.5 589.5 L83 589.5" stroke="#cfcfcf" stroke-width="1"/><path d="M80.5 579.5 L83 579.5" stroke="#cfcfcf" stroke-width="1"/><path d="M80.5 569.5 L83 569.5" stroke="#cfcfcf" stroke-width="1"/><path d="M80.5 560.5 L83 560.5" stroke="#cfcfcf" stroke-width="1"/><path d="M80.5 550.5 L83 550.5" stroke="#cfcfcf" stroke-width="1"/><path d="M80.5 540.5 L83 540.5" stroke="#cfcfcf" stroke-width="1"/><path d="M83.5 533.5 L83.5 829.5 L1269.5 829.5" fill="none" stroke="#d6d6d6" stroke-width="1.3"/><path d="M107.5 829.5 L107.5 832" stroke="#cfcfcf" stroke-width="1"/><path d="M154.5 829.5 L154.5 832" stroke="#cfcfcf" stroke-width="1"/><path d="M202.5 829.5 L202.5 834.5" stroke="#cfcfcf" stroke-width="1"/><path d="M249.5 829.5 L249.5 832" stroke="#cfcfcf" stroke-width="1"/><path d="M296.5 829.5 L296.5 832" stroke="#cfcfcf" stroke-width="1"/><path d="M344.5 829.5 L344.5 832" stroke="#cfcfcf" stroke-width="1"/><path d="M391.5 829.5 L391.5 832" stroke="#cfcfcf" stroke-width="1"/><path d="M438.5 829.5 L438.5 834.5" stroke="#cfcfcf" stroke-width="1"/><path d="M486.5 829.5 L486.5 832" stroke="#cfcfcf" stroke-width="1"/><path d="M533.5 829.5 L533.5 832" stroke="#cfcfcf" stroke-width="1"/><path d="M581.5 829.5 L581.5 832" stroke="#cfcfcf" stroke-width="1"/><path d="M628.5 829.5 L628.5 832" stroke="#cfcfcf" stroke-width="1"/><path d="M676.5 829.5 L676.5 834.5" stroke="#cfcfcf" stroke-width="1"/><path d="M723.5 829.5 L723.5 832" stroke="#cfcfcf" stroke-width="1"/><path d="M770.5 829.5 L770.5 832" stroke="#cfcfcf" stroke-width="1"/><path d="M818.5 829.5 L818.5 832" stroke="#cfcfcf" stroke-width="1"/><path d="M865.5 829.5 L865.5 832" stroke="#cfcfcf" stroke-width="1"/><path d="M912.5 829.5 L912.5 834.5" stroke="#cfcfcf" stroke-width="1"/><path d="M960.5 829.5 L960.5 832" stroke="#cfcfcf" stroke-width="1"/><path d="M1007.5 829.5 L1007.5 832" stroke="#cfcfcf" stroke-width="1"/><path d="M1055.5 829.5 L1055.5 832" stroke="#cfcfcf" stroke-width="1"/><path d="M1102.5 829.5 L1102.5 832" stroke="#cfcfcf" stroke-width="1"/><path d="M1150.5 829.5 L1150.5 834.5" stroke="#cfcfcf" stroke-width="1"/><path d="M1197.5 829.5 L1197.5 832" stroke="#cfcfcf" stroke-width="1"/><path d="M1244.5 829.5 L1244.5 832" stroke="#cfcfcf" stroke-width="1"/><rect x="126.10" y="582.85" width="12.5" height="237.95" fill="#2891ad"/><rect x="140.00" y="717.42" width="12.5" height="103.38" fill="#c41a24"/><rect x="153.90" y="774.79" width="12.5" height="46.01" fill="#d85716"/><rect x="167.80" y="804.33" width="12.5" height="16.47" fill="url(#pb)"/><rect x="181.70" y="717.38" width="12.5" height="103.42" fill="#41436e"/><rect x="195.60" y="796.57" width="12.5" height="24.23" fill="#6d3a45"/><rect x="209.50" y="791.14" width="12.5" height="29.66" fill="#8ecde5"/><rect x="223.40" y="702.51" width="12.5" height="118.29" fill="#ec8890"/><rect x="237.30" y="740.03" width="12.5" height="80.77" fill="url(#pp)"/><rect x="251.20" y="792.17" width="12.5" height="28.63" fill="url(#pc)"/><rect x="265.10" y="675.41" width="12.5" height="145.39" fill="#8489b8"/><rect x="363.10" y="561.28" width="12.5" height="259.52" fill="#2891ad"/><rect x="377.00" y="725.30" width="12.5" height="95.50" fill="#c41a24"/><rect x="390.90" y="771.84" width="12.5" height="48.96" fill="#d85716"/><rect x="404.80" y="804.51" width="12.5" height="16.29" fill="url(#pb)"/><rect x="418.70" y="716.04" width="12.5" height="104.76" fill="#41436e"/><rect x="432.60" y="796.89" width="12.5" height="23.91" fill="#6d3a45"/><rect x="446.50" y="791.33" width="12.5" height="29.47" fill="#8ecde5"/><rect x="460.40" y="703.10" width="12.5" height="117.70" fill="#ec8890"/><rect x="474.30" y="740.71" width="12.5" height="80.09" fill="url(#pp)"/><rect x="488.20" y="791.59" width="12.5" height="29.21" fill="url(#pc)"/><rect x="502.10" y="675.80" width="12.5" height="145.00" fill="#8489b8"/><rect x="600.10" y="571.85" width="12.5" height="248.95" fill="#2891ad"/><rect x="614.00" y="712.98" width="12.5" height="107.82" fill="#c41a24"/><rect x="627.90" y="776.88" width="12.5" height="43.92" fill="#d85716"/><rect x="641.80" y="804.30" width="12.5" height="16.50" fill="url(#pb)"/><rect x="655.70" y="715.24" width="12.5" height="105.56" fill="#41436e"/><rect x="669.60" y="796.73" width="12.5" height="24.07" fill="#6d3a45"/><rect x="683.50" y="790.53" width="12.5" height="30.27" fill="#8ecde5"/><rect x="697.40" y="699.43" width="12.5" height="121.37" fill="#ec8890"/><rect x="711.30" y="739.06" width="12.5" height="81.74" fill="url(#pp)"/><rect x="725.20" y="791.59" width="12.5" height="29.21" fill="url(#pc)"/><rect x="739.10" y="672.61" width="12.5" height="148.19" fill="#8489b8"/><rect x="837.10" y="558.34" width="12.5" height="262.46" fill="#2891ad"/><rect x="851.00" y="723.64" width="12.5" height="97.16" fill="#c41a24"/><rect x="864.90" y="777.55" width="12.5" height="43.25" fill="#d85716"/><rect x="878.80" y="804.14" width="12.5" height="16.66" fill="url(#pb)"/><rect x="892.70" y="716.31" width="12.5" height="104.49" fill="#41436e"/><rect x="906.60" y="796.60" width="12.5" height="24.20" fill="#6d3a45"/><rect x="920.50" y="790.99" width="12.5" height="29.81" fill="#8ecde5"/><rect x="934.40" y="698.89" width="12.5" height="121.91" fill="#ec8890"/><rect x="948.30" y="738.10" width="12.5" height="82.70" fill="url(#pp)"/><rect x="962.20" y="791.59" width="12.5" height="29.21" fill="url(#pc)"/><rect x="976.10" y="672.03" width="12.5" height="148.77" fill="#8489b8"/><rect x="1074.10" y="575.89" width="12.5" height="244.91" fill="#2891ad"/><rect x="1088.00" y="714.65" width="12.5" height="106.15" fill="#c41a24"/><rect x="1101.90" y="775.27" width="12.5" height="45.53" fill="#d85716"/><rect x="1115.80" y="804.16" width="12.5" height="16.64" fill="url(#pb)"/><rect x="1129.70" y="715.99" width="12.5" height="104.81" fill="#41436e"/><rect x="1143.60" y="796.76" width="12.5" height="24.04" fill="#6d3a45"/><rect x="1157.50" y="791.63" width="12.5" height="29.17" fill="#8ecde5"/><rect x="1171.40" y="698.95" width="12.5" height="121.85" fill="#ec8890"/><rect x="1185.30" y="738.10" width="12.5" height="82.70" fill="url(#pp)"/><rect x="1199.20" y="791.59" width="12.5" height="29.21" fill="url(#pc)"/><rect x="1213.10" y="670.97" width="12.5" height="149.83" fill="#8489b8"/></svg><div class="a" style="right:1463.50px;top:816.40px;font-size:10.4px;color:#444;letter-spacing:-0.15px">0.00</div><div class="a" style="right:1463.50px;top:787.38px;font-size:10.4px;color:#444;letter-spacing:-0.15px">300,000.00</div><div class="a" style="right:1463.50px;top:758.36px;font-size:10.4px;color:#444;letter-spacing:-0.15px">600,000.00</div><div class="a" style="right:1463.50px;top:729.34px;font-size:10.4px;color:#444;letter-spacing:-0.15px">900,000.00</div><div class="a" style="right:1463.50px;top:700.32px;font-size:10.4px;color:#444;letter-spacing:-0.15px">1,200,000.00</div><div class="a" style="right:1463.50px;top:671.30px;font-size:10.4px;color:#444;letter-spacing:-0.15px">1,500,000.00</div><div class="a" style="right:1463.50px;top:642.28px;font-size:10.4px;color:#444;letter-spacing:-0.15px">1,800,000.00</div><div class="a" style="right:1463.50px;top:613.26px;font-size:10.4px;color:#444;letter-spacing:-0.15px">2,100,000.00</div><div class="a" style="right:1463.50px;top:584.24px;font-size:10.4px;color:#444;letter-spacing:-0.15px">2,400,000.00</div><div class="a" style="right:1463.50px;top:555.23px;font-size:10.4px;color:#444;letter-spacing:-0.15px">2,700,000.00</div><div class="a " style="left:168.90px;top:838.20px;font-size:10.4px;color:#444;letter-spacing:0.090px;">Vol Only | 95%</div><div class="a " style="left:411.50px;top:838.20px;font-size:10.4px;color:#444;letter-spacing:0.145px;">Today | 95%</div><div class="a " style="left:640.00px;top:838.20px;font-size:10.4px;color:#444;letter-spacing:-0.044px;">Price only | 95%</div><div class="a " style="left:867.70px;top:838.20px;font-size:10.4px;color:#444;letter-spacing:-0.019px;">Positions Only | 95%</div><div class="a " style="left:1116.30px;top:838.20px;font-size:10.4px;color:#444;letter-spacing:0.044px;">Corr only | 95%</div><div class="a" style="left:1279px;top:533px;width:239px;height:198px;background:#fff;border:1px solid #d4d4d4"></div><div class="a" style="left:1289px;top:544px;width:17px;height:13px;background:#2891ad"></div><div class="a " style="left:1310.70px;top:546.24px;font-size:10px;color:#4a4a4a;letter-spacing:-0.062px;">Energy | EU Power &amp; Gas | Continental Gas</div><div class="a" style="left:1289px;top:560px;width:17px;height:13px;background:#c41a24"></div><div class="a " style="left:1310.70px;top:562.57px;font-size:10px;color:#4a4a4a;letter-spacing:-0.099px;">Energy | EU Power &amp; Gas | UK Power &amp; Gas</div><div class="a" style="left:1289px;top:576px;width:17px;height:13px;background:#d85716"></div><div class="a " style="left:1310.70px;top:578.89px;font-size:10px;color:#4a4a4a;letter-spacing:0.108px;">Energy | Oil | Crude Trading</div><div class="a" style="left:1289px;top:593px;width:17px;height:13px;background:#33578f"></div><div class="a " style="left:1310.70px;top:595.23px;font-size:10px;color:#4a4a4a;letter-spacing:0.132px;">Energy | Oil | Ethanol</div><div class="a" style="left:1289px;top:609px;width:17px;height:13px;background:#41436e"></div><div class="a " style="left:1310.70px;top:611.55px;font-size:10px;color:#4a4a4a;letter-spacing:0.101px;">Energy | Oil | Fuel Oil</div><div class="a" style="left:1289px;top:625px;width:17px;height:13px;background:#6d3a45"></div><div class="a " style="left:1310.70px;top:627.88px;font-size:10px;color:#4a4a4a;letter-spacing:0.088px;">Energy | Oil | Light Distillates</div><div class="a" style="left:1289px;top:642px;width:17px;height:13px;background:#8ecde5"></div><div class="a " style="left:1310.70px;top:644.22px;font-size:10px;color:#4a4a4a;letter-spacing:0.033px;">Energy | Oil | Middle Distillates</div><div class="a" style="left:1289px;top:658px;width:17px;height:13px;background:#ec8890"></div><div class="a " style="left:1310.70px;top:660.54px;font-size:10px;color:#4a4a4a;letter-spacing:-0.119px;">Energy | US Power &amp; Gas | US Gas</div><div class="a" style="left:1289px;top:674px;width:17px;height:13px;background:#f3b38a"></div><div class="a " style="left:1310.70px;top:676.88px;font-size:10px;color:#4a4a4a;letter-spacing:0.031px;">Minerals | Coal | Asian Coal</div><div class="a" style="left:1289px;top:691px;width:17px;height:13px;background:#7ba1d6"></div><div class="a " style="left:1310.70px;top:693.21px;font-size:10px;color:#4a4a4a;letter-spacing:-0.025px;">Minerals | Coal | EU Coal</div><div class="a" style="left:1289px;top:707px;width:17px;height:13px;background:#8489b8"></div><div class="a " style="left:1310.70px;top:709.53px;font-size:10px;color:#4a4a4a;letter-spacing:0.065px;">Minerals | Coal | Met Coal</div></body></html>
